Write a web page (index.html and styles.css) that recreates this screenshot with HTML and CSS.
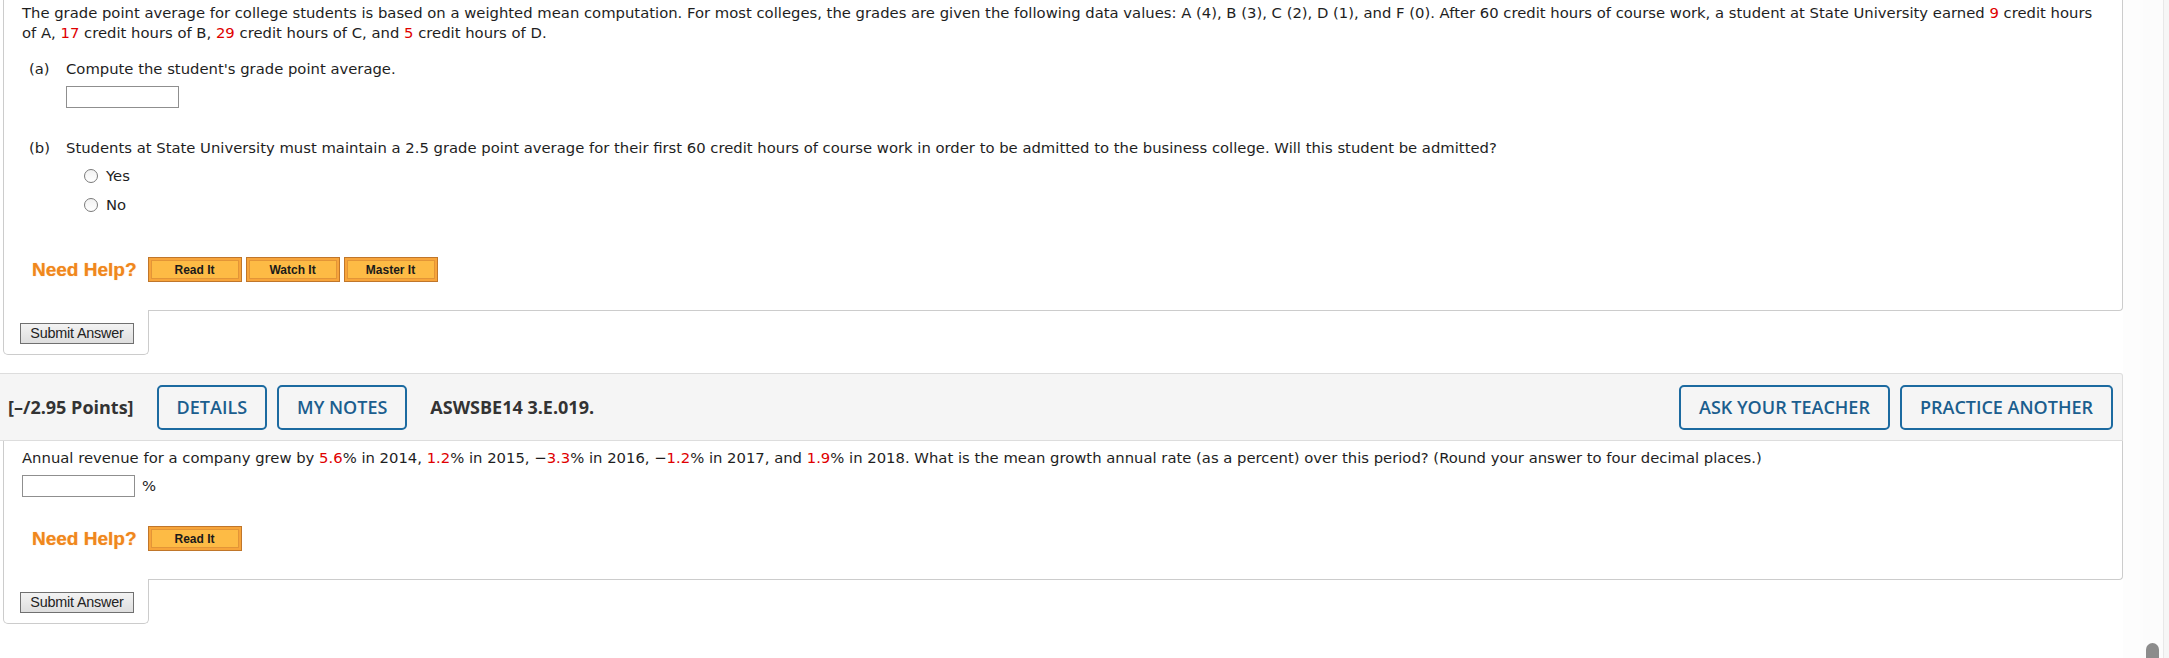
FILE: index.html
```html
<!DOCTYPE html>
<html lang="en">
<head>
<meta charset="utf-8">
<title>Questions</title>
<link rel="stylesheet" href="styles.css">
</head>
<body>
<div class="page">
  <div class="content">
    <div class="question first">
      <div class="qbody">
        <p class="stem"><span>The grade point average for college students is based on a weighted mean computation. For most colleges, the grades are given the following data values: A (4), B (3), C (2), D (1), and F (0). After 60 credit hours of course work, a student at State University earned</span> <span class="red">9</span> <span>credit hours</span> <span>of A,</span> <span class="red">17</span> <span>credit hours of B,</span> <span class="red">29</span> <span>credit hours of C, and</span> <span class="red">5</span> <span>credit hours of D.</span></p>
        <div class="part">
          <span class="plabel">(a)</span>
          <div class="pbody">
            <div class="ptext">Compute the student's grade point average.</div>
            <input class="answer" type="text" aria-label="grade point average">
          </div>
        </div>
        <div class="part partb">
          <span class="plabel">(b)</span>
          <div class="pbody">
            <div class="ptext">Students at State University must maintain a 2.5 grade point average for their first 60 credit hours of course work in order to be admitted to the business college. Will this student be admitted?</div>
            <div class="options">
              <label class="option"><span class="radio"></span>Yes</label>
              <label class="option"><span class="radio"></span>No</label>
            </div>
          </div>
        </div>
        <div class="help help-first">
          <span class="help-label">Need Help?</span>
          <span class="help-btn">Read It</span>
          <span class="help-btn">Watch It</span>
          <span class="help-btn">Master It</span>
        </div>
      </div>
      <div class="submit-tab"><button class="submit" type="button">Submit Answer</button></div>
    </div>

    <div class="question second">
      <div class="qhead">
        <span class="points">[&ndash;/2.95 Points]</span>
        <span class="hbtn hbtn-first">DETAILS</span>
        <span class="hbtn">MY NOTES</span>
        <span class="qid">ASWSBE14 3.E.019.</span>
        <span class="hspacer"></span>
        <span class="hbtn">ASK YOUR TEACHER</span>
        <span class="hbtn">PRACTICE ANOTHER</span>
      </div>
      <div class="qbody qbody-second">
        <div class="ptext"><span>Annual revenue for a company grew by</span> <span class="red">5.6</span><span>% in 2014,</span> <span class="red">1.2</span><span>% in 2015, &minus;</span><span class="red">3.3</span><span>% in 2016, &minus;</span><span class="red">1.2</span><span>% in 2017, and</span> <span class="red">1.9</span><span>% in 2018. What is the mean growth annual rate (as a percent) over this period? (Round your answer to four decimal places.)</span></div>
        <div class="answer-row"><input class="answer" type="text" aria-label="mean growth rate"><span class="unit">%</span></div>
        <div class="help help-second">
          <span class="help-label">Need Help?</span>
          <span class="help-btn">Read It</span>
        </div>
      </div>
      <div class="submit-tab"><button class="submit" type="button">Submit Answer</button></div>
    </div>
  </div>
  <div class="gutter"></div>
  <div class="scrollbar"><div class="thumb"></div></div>
  <div class="edge"></div>
</div>
</body>
</html>
```

FILE: styles.css
```css
html, body {
  margin: 0;
  padding: 0;
  background: #ffffff;
}

body {
  font-family: "DejaVu Sans", Verdana, sans-serif;
  font-size: 14.8px;
  line-height: 20px;
  color: #1e1e1e;
}

.page {
  display: flex;
  height: 658px;
  overflow: hidden;
}

.content {
  flex: 0 0 2123px;
}

.gutter {
  flex: 1 1 auto;
  background: #fdfdfd;
}

.scrollbar {
  flex: 0 0 20px;
  background: #fcfcfc;
  border-right: 1px solid #e8e8e8;
  display: flex;
  flex-direction: column;
  justify-content: flex-end;
}

.thumb {
  width: 13px;
  height: 15px;
  margin-left: 3px;
  border-radius: 7px 7px 0 0;
  background: #8c8c8c;
}

.edge {
  flex: 0 0 5px;
  background: #f6f6f6;
}

.red {
  color: #e00000;
}

.question {
  margin-left: 3px;
}

.qbody {
  border: 1px solid #cccccc;
  border-top: none;
  border-radius: 0 0 4px 0;
  background: #ffffff;
  padding: 3px 12px 28px 18px;
}

.stem {
  margin: 0 0 16px 0;
}

.part {
  display: flex;
  padding-left: 7px;
}

.plabel {
  flex: 0 0 37px;
}

.pbody {
  flex: 1 1 auto;
}

.answer {
  display: block;
  box-sizing: border-box;
  width: 113px;
  height: 22px;
  margin: 7px 0 0 0;
  padding: 0;
  border: 1px solid #8f8f8f;
  background: #ffffff;
  font: inherit;
}

.partb {
  margin-top: 30px;
}

.options {
  padding-top: 8px;
  padding-left: 18px;
}

.option {
  display: flex;
  align-items: center;
  height: 20px;
  margin-bottom: 9px;
}

.option:last-child {
  margin-bottom: 0;
}

.radio {
  box-sizing: border-box;
  width: 14px;
  height: 14px;
  border: 1px solid #7a7a7a;
  border-radius: 50%;
  background: linear-gradient(#f2f2f2, #ffffff);
  margin-right: 8px;
}

.help {
  display: flex;
  align-items: center;
  gap: 4px;
  padding-left: 10px;
}

.help-first {
  margin-top: 42px;
}

.help-second {
  margin-top: 29px;
}

.help-label {
  font-family: "Liberation Sans", Arial, sans-serif;
  font-weight: bold;
  font-size: 19px;
  color: #f0871c;
  text-shadow: 0 0 1px rgba(240, 135, 28, 0.6);
  margin-right: 7px;
}

.help-btn {
  box-sizing: border-box;
  width: 94px;
  height: 25px;
  display: flex;
  align-items: center;
  justify-content: center;
  font-family: "Liberation Sans", Arial, sans-serif;
  font-weight: bold;
  font-size: 12px;
  color: #1a1a1a;
  border: 1px solid #c0762a;
  background: #fdbb45;
  box-shadow: inset 0 0 0 2px #f7a43a, inset 0 0 0 3px #e39537;
}

.submit-tab {
  width: fit-content;
  margin-top: -1px;
  background: #ffffff;
  border: 1px solid #cccccc;
  border-top: none;
  border-radius: 0 0 5px 5px;
  padding: 13px 14px 10px 16px;
}

.submit {
  display: block;
  box-sizing: border-box;
  width: 114px;
  height: 21px;
  padding: 0;
  border: 1px solid #707070;
  background: linear-gradient(#f3f3f3, #dedede);
  font-family: "Liberation Sans", Arial, sans-serif;
  font-size: 14.4px;
  line-height: 19px;
  color: #222222;
  letter-spacing: -0.2px;
}

.second {
  margin-top: 18px;
  margin-left: 0;
}

.qhead {
  display: flex;
  align-items: center;
  height: 66px;
  background: #f5f5f5;
  border-top: 1px solid #dddddd;
  border-bottom: 1px solid #dddddd;
  border-right: 1px solid #dddddd;
  border-radius: 0 3px 0 0;
  padding: 0 9px 0 8px;
  font-family: "Open Sans", "Noto Sans", sans-serif;
  font-size: 18px;
  color: #333333;
}

.points {
  font-weight: bold;
  margin-right: 23px;
}

.qid {
  font-weight: bold;
  margin-left: 23px;
}

.hspacer {
  flex: 1 1 auto;
}

.hbtn {
  box-sizing: border-box;
  height: 45px;
  display: flex;
  align-items: center;
  padding: 0 18px;
  border: 2px solid #1c6aa0;
  border-radius: 5px;
  color: #1b5e8e;
  font-weight: 600;
  background: #f5f5f5;
  margin-left: 10px;
}

.hbtn-first {
  margin-left: 0;
}

.qbody-second {
  margin-left: 3px;
  padding-top: 7px;
}

.second .submit-tab {
  margin-left: 3px;
}

.answer-row {
  display: flex;
  align-items: center;
  margin-top: 7px;
}

.answer-row .answer {
  margin: 0;
}

.unit {
  margin-left: 7px;
}
```
